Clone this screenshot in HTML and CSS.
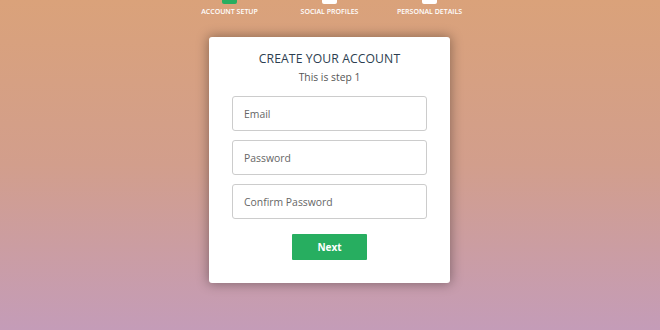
FILE: index.html
```html
<!DOCTYPE html>
<html lang="en">
<head>
<meta charset="utf-8">
<title>Create your account</title>
<link rel="stylesheet" href="styles.css">
</head>
<body>
<div class="page">
  <ul class="steps">
    <li class="step active"><span class="marker"></span><span class="label">Account Setup</span></li>
    <li class="step"><span class="marker"></span><span class="label">Social Profiles</span></li>
    <li class="step"><span class="marker"></span><span class="label">Personal Details</span></li>
  </ul>
  <form class="card">
    <h2 class="title">Create your account</h2>
    <p class="subtitle">This is step 1</p>
    <input class="field" type="text" placeholder="Email">
    <input class="field" type="password" placeholder="Password">
    <input class="field" type="password" placeholder="Confirm Password">
    <button class="btn" type="button">Next</button>
  </form>
</div>
</body>
</html>
```
FILE: styles.css
```css
html, body {
  margin: 0;
  height: 100%;
}
body {
  background: linear-gradient(180deg, #daa27a 0%, #d29e8c 50%, #c49cb8 100%);
  font-family: "Open Sans", "Liberation Sans", sans-serif;
}
.page {
  display: flex;
  flex-direction: column;
  align-items: center;
  padding-right: 1px;
}
.steps {
  display: flex;
  margin: 0;
  padding: 0;
  list-style: none;
}
.step {
  width: 100px;
  display: flex;
  flex-direction: column;
  align-items: center;
}
.marker {
  width: 15px;
  height: 4px;
  background: #fff;
  border-radius: 0 0 2px 2px;
}
.step.active .marker {
  background: #27ae60;
}
.label {
  margin-top: 4px;
  font-size: 7px;
  line-height: 8px;
  font-weight: 600;
  color: #fff;
  text-transform: uppercase;
  white-space: nowrap;
}
.card {
  margin-top: 21px;
  width: 241px;
  box-sizing: border-box;
  padding: 14px 23px 23px;
  background: #fff;
  border-radius: 3px;
  box-shadow: 0 0 12px 1px rgba(0, 0, 0, 0.35);
  display: flex;
  flex-direction: column;
  align-items: center;
}
.title {
  margin: 0;
  font-size: 12.2px;
  line-height: 16px;
  font-weight: 400;
  letter-spacing: 0.1px;
  color: #2c3e50;
  text-transform: uppercase;
}
.subtitle {
  margin: 3px 0 12px;
  font-size: 10.3px;
  line-height: 14px;
  color: #555;
}
.field {
  width: 100%;
  height: 35px;
  box-sizing: border-box;
  margin: 0 0 9px;
  padding: 0 11px;
  border: 1px solid #ccc;
  border-radius: 3px;
  font-family: inherit;
  font-size: 10.4px;
  color: #2c3e50;
  background: #fff;
}
.field::placeholder {
  color: #666;
}
.btn {
  margin-top: 6px;
  width: 75px;
  height: 26px;
  border: none;
  border-radius: 1px;
  background: #27ae60;
  color: #fff;
  font-family: inherit;
  font-weight: 700;
  font-size: 10px;
}
```
